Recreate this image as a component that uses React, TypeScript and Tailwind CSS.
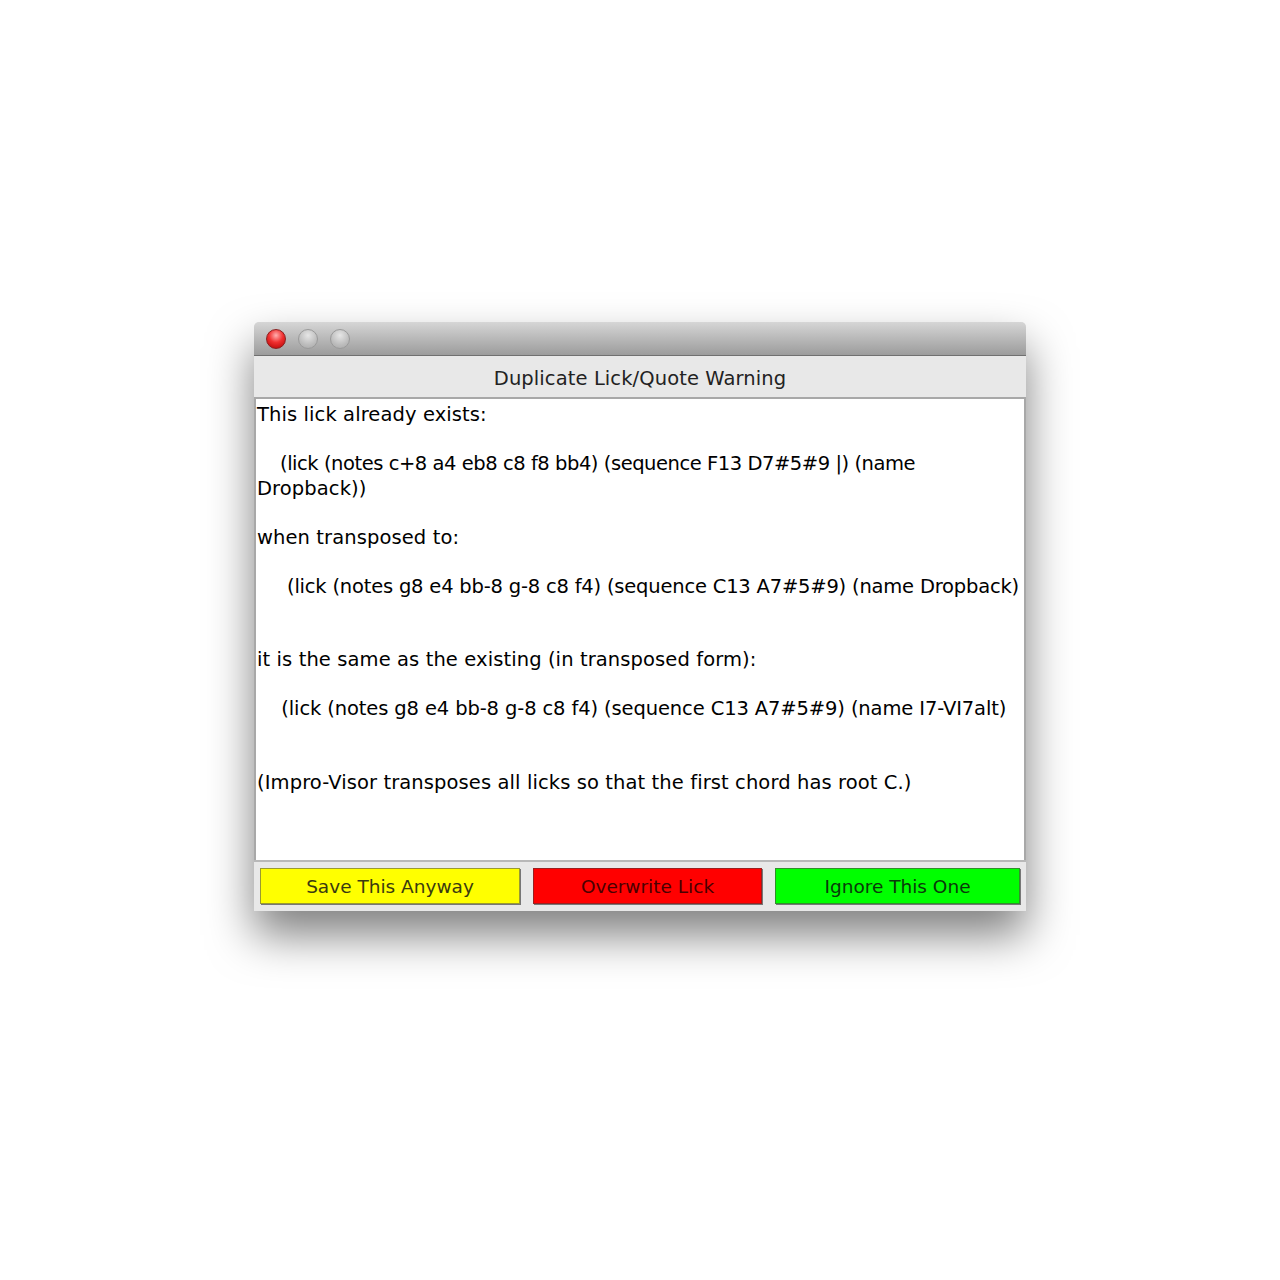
import React from 'react'

// Lines of the warning message, blanks included; track narrows the lick lines
const lines: { text: string; track?: string }[] = [
  { text: 'This lick already exists:' },
  { text: '' },
  { text: '    (lick (notes c+8 a4 eb8 c8 f8 bb4) (sequence F13 D7#5#9 |) (name', track: 'tracking-[-0.45px]' },
  { text: 'Dropback))' },
  { text: '' },
  { text: 'when transposed to:' },
  { text: '' },
  { text: '     (lick (notes g8 e4 bb-8 g-8 c8 f4) (sequence C13 A7#5#9) (name Dropback)', track: 'tracking-[-0.2px]' },
  { text: '' },
  { text: '' },
  { text: 'it is the same as the existing (in transposed form):' },
  { text: '' },
  { text: '    (lick (notes g8 e4 bb-8 g-8 c8 f4) (sequence C13 A7#5#9) (name I7-VI7alt)', track: 'tracking-[-0.12px]' },
  { text: '' },
  { text: '' },
  { text: '(Impro-Visor transposes all licks so that the first chord has root C.)' },
]

function Light({ color }: { color: 'red' | 'gray' }) {
  return (
    <span
      className={
        color === 'red'
          ? 'w-[20px] h-[20px] rounded-full border border-[#8a2020] bg-[radial-gradient(circle_at_50%_30%,#ffb0b0_0%,#f03030_45%,#b00000_100%)]'
          : 'w-[20px] h-[20px] rounded-full border border-[#9a9a9a] bg-[radial-gradient(circle_at_50%_30%,#e6e6e6_0%,#bdbdbd_60%,#a8a8a8_100%)]'
      }
    />
  )
}

export default function App() {
  return (
    <div className="w-[1280px] h-[1280px] bg-white flex items-start justify-center pt-[322px]" style={{ fontFamily: '"DejaVu Sans", "Lucida Grande", sans-serif' }}>
      <div className="w-[772px] flex flex-col bg-[#e8e8e8] shadow-[0_24px_45px_rgba(0,0,0,0.5)] rounded-t-[5px]">
        {/* Barra de título */}
        <div className="h-[34px] rounded-t-[5px] bg-gradient-to-b from-[#d6d6d6] to-[#9c9c9c] border-b border-[#707070] flex items-center gap-[12px] pl-[12px]">
          <Light color="red" />
          <Light color="gray" />
          <Light color="gray" />
        </div>
        {/* Encabezado */}
        <div className="h-[43px] flex items-center justify-center pt-[4px] text-[19.5px] tracking-[0.1px] text-[#222] border-b-2 border-[#a8a8a8]">
          Duplicate Lick/Quote Warning
        </div>
        {/* Mensaje */}
        <div className="h-[461px] bg-white border-l-2 border-r-2 border-[#a8a8a8] px-[1px] pt-[4px] text-[19.5px] leading-[24.5px] text-black whitespace-pre overflow-hidden">
          {lines.map((l, i) => (
            <div key={i} className={l.track ? 'h-[24.5px] ' + l.track : 'h-[24.5px] tracking-[0.1px]'}>{l.text}</div>
          ))}
        </div>
        {/* Botones */}
        <div className="h-[51px] border-t-2 border-[#b8b8b8] flex items-center px-[6px] gap-[13px] pb-[2px]">
          <button className="w-[260px] h-[36px] pt-[3px] bg-[#ffff00] border border-[#9a9a30] shadow-[1px_1px_0_#777] text-[18.5px] text-[#3a3a10]">Save This Anyway</button>
          <button className="w-[229px] h-[36px] pt-[3px] bg-[#ff0000] border border-[#9a2020] shadow-[1px_1px_0_#777] text-[18.5px] text-[#4a0000]">Overwrite Lick</button>
          <button className="w-[245px] h-[36px] pt-[3px] bg-[#00ff00] border border-[#30902a] shadow-[1px_1px_0_#777] text-[18.5px] text-[#0a3a0a]">Ignore This One</button>
        </div>
      </div>
    </div>
  )
}
